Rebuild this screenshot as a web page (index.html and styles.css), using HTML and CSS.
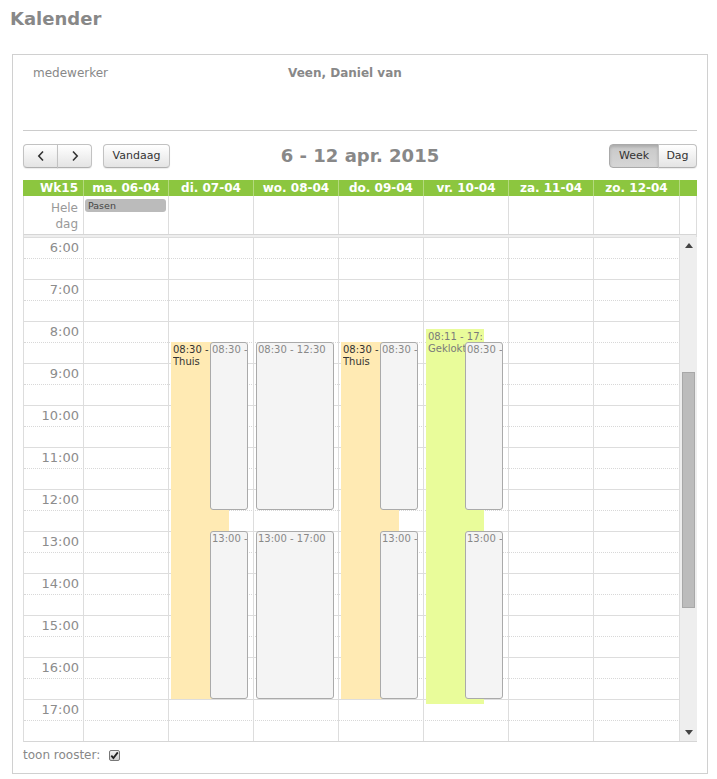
FILE: index.html
```html
<!DOCTYPE html>
<html lang="nl">
<head>
<meta charset="utf-8">
<title>Kalender</title>
<link rel="stylesheet" href="styles.css">
</head>
<body>
<h1 class="page-title">Kalender</h1>
<div class="panel">
  <div class="info">
    <span class="info-label">medewerker</span>
    <span class="info-value">Veen, Daniel van</span>
  </div>

  <div class="toolbar">
    <div class="tb-left">
      <div class="btn-group">
        <button class="btn btn-arrow" type="button" aria-label="vorige">
          <svg width="8" height="12" viewBox="0 0 8 12"><polyline points="6,1.5 1.8,6 6,10.5" fill="none" stroke="#333" stroke-width="1.6"/></svg>
        </button>
        <button class="btn btn-arrow" type="button" aria-label="volgende">
          <svg width="8" height="12" viewBox="0 0 8 12"><polyline points="2,1.5 6.2,6 2,10.5" fill="none" stroke="#333" stroke-width="1.6"/></svg>
        </button>
      </div>
      <button class="btn btn-today" type="button">Vandaag</button>
    </div>
    <h2 class="range-title">6 - 12 apr. 2015</h2>
    <div class="tb-right">
      <div class="btn-group">
        <button class="btn btn-week is-active" type="button">Week</button>
        <button class="btn btn-day" type="button">Dag</button>
      </div>
    </div>
  </div>

  <div class="cal-head">
    <div class="hd-cell hd-axis">Wk15</div>
    <div class="hd-cell">ma. 06-04</div>
    <div class="hd-cell">di. 07-04</div>
    <div class="hd-cell">wo. 08-04</div>
    <div class="hd-cell">do. 09-04</div>
    <div class="hd-cell">vr. 10-04</div>
    <div class="hd-cell">za. 11-04</div>
    <div class="hd-cell">zo. 12-04</div>
    <div class="hd-cell hd-gutter"></div>
  </div>

  <div class="allday">
    <div class="ad-cell ad-axis">Hele<br>dag</div>
    <div class="ad-cell"><div class="ad-event">Pasen</div></div>
    <div class="ad-cell"></div>
    <div class="ad-cell"></div>
    <div class="ad-cell"></div>
    <div class="ad-cell"></div>
    <div class="ad-cell"></div>
    <div class="ad-cell"></div>
    <div class="ad-cell ad-gutter"></div>
  </div>

  <div class="divider"></div>

  <div class="tg">
    <div class="tg-main">
      <div class="slots">
        <div class="slot hour"><span class="axis-label">6:00</span></div>
        <div class="slot half"></div>
        <div class="slot hour"><span class="axis-label">7:00</span></div>
        <div class="slot half"></div>
        <div class="slot hour"><span class="axis-label">8:00</span></div>
        <div class="slot half"></div>
        <div class="slot hour"><span class="axis-label">9:00</span></div>
        <div class="slot half"></div>
        <div class="slot hour"><span class="axis-label">10:00</span></div>
        <div class="slot half"></div>
        <div class="slot hour"><span class="axis-label">11:00</span></div>
        <div class="slot half"></div>
        <div class="slot hour"><span class="axis-label">12:00</span></div>
        <div class="slot half"></div>
        <div class="slot hour"><span class="axis-label">13:00</span></div>
        <div class="slot half"></div>
        <div class="slot hour"><span class="axis-label">14:00</span></div>
        <div class="slot half"></div>
        <div class="slot hour"><span class="axis-label">15:00</span></div>
        <div class="slot half"></div>
        <div class="slot hour"><span class="axis-label">16:00</span></div>
        <div class="slot half"></div>
        <div class="slot hour"><span class="axis-label">17:00</span></div>
        <div class="slot half"></div>
      </div>
      <div class="day-cols">
        <div class="col-axis"></div>
        <div class="day-col"></div>
        <div class="day-col">
          <div class="ev ev-back ev-thuis" style="top:105px;height:357px"><div class="ev-time">08:30 - 17:00</div><div class="ev-title">Thuis</div></div>
          <div class="ev ev-front ev-rooster" style="top:105px;height:168px"><div class="ev-time">08:30 - 12:30</div></div>
          <div class="ev ev-front ev-rooster" style="top:294px;height:168px"><div class="ev-time">13:00 - 17:00</div></div>
        </div>
        <div class="day-col">
          <div class="ev ev-full ev-rooster" style="top:105px;height:168px"><div class="ev-time">08:30 - 12:30</div></div>
          <div class="ev ev-full ev-rooster" style="top:294px;height:168px"><div class="ev-time">13:00 - 17:00</div></div>
        </div>
        <div class="day-col">
          <div class="ev ev-back ev-thuis" style="top:105px;height:357px"><div class="ev-time">08:30 - 17:00</div><div class="ev-title">Thuis</div></div>
          <div class="ev ev-front ev-rooster" style="top:105px;height:168px"><div class="ev-time">08:30 - 12:30</div></div>
          <div class="ev ev-front ev-rooster" style="top:294px;height:168px"><div class="ev-time">13:00 - 17:00</div></div>
        </div>
        <div class="day-col">
          <div class="ev ev-back ev-geklokt" style="top:92px;height:375px"><div class="ev-time">08:11 - 17:07</div><div class="ev-title">Geklokt</div></div>
          <div class="ev ev-front ev-rooster" style="top:105px;height:168px"><div class="ev-time">08:30 - 12:30</div></div>
          <div class="ev ev-front ev-rooster" style="top:294px;height:168px"><div class="ev-time">13:00 - 17:00</div></div>
        </div>
        <div class="day-col"></div>
        <div class="day-col"></div>
      </div>
    </div>
    <div class="scrollbar">
      <div class="sb-arrow">
        <svg width="8" height="5" viewBox="0 0 8 5"><polygon points="0,5 8,5 4,0" fill="#444"/></svg>
      </div>
      <div class="sb-track"><div class="sb-thumb"></div></div>
      <div class="sb-arrow">
        <svg width="8" height="5" viewBox="0 0 8 5"><polygon points="0,0 8,0 4,5" fill="#444"/></svg>
      </div>
    </div>
  </div>

  <div class="footer">
    <span class="footer-label">toon rooster:</span>
    <span class="check" role="checkbox" aria-checked="true">
      <svg width="9" height="9" viewBox="0 0 9 9"><polyline points="1.3,4.6 3.4,7 7.8,1.4" fill="none" stroke="#222" stroke-width="1.8"/></svg>
    </span>
  </div>
</div>
</body>
</html>
```

FILE: styles.css
```css
* { box-sizing: border-box; }

body {
  margin: 0;
  background: #fff;
  color: #888;
  font-family: "DejaVu Sans", Verdana, sans-serif;
}

.page-title {
  margin: 0;
  padding: 8px 0 0 10px;
  font-size: 18px;
  line-height: 22px;
  font-weight: bold;
  color: #888;
}

.panel {
  margin: 24px 0 0 12px;
  width: 696px;
  height: 720px;
  border: 1px solid #d0d0d0;
  padding: 0 10px;
}

/* info */
.info {
  display: flex;
  height: 76px;
  padding: 11px 10px 0;
  border-bottom: 1px solid #ccc;
  font-size: 12px;
  line-height: 15px;
}
.info-label { width: 255px; color: #888; }
.info-value { font-weight: bold; color: #888; }

/* toolbar */
.toolbar {
  display: grid;
  grid-template-columns: 1fr auto 1fr;
  align-items: center;
  height: 49px;
  padding: 13px 0 12px;
}
.tb-left { display: flex; align-items: center; gap: 11px; }
.tb-right { display: flex; justify-content: flex-end; }
.btn-group { display: flex; }

.btn {
  height: 24px;
  margin: 0;
  padding: 0 8px;
  border: 1px solid #c2c2c2;
  border-bottom-color: #b0b0b0;
  border-radius: 4px;
  background: linear-gradient(#ffffff, #e4e4e4);
  box-shadow: 0 1px 1px rgba(0,0,0,0.08);
  color: #333;
  font-family: "DejaVu Sans", Verdana, sans-serif;
  font-size: 11px;
  line-height: 22px;
  display: flex;
  align-items: center;
  justify-content: center;
}
.btn-group .btn + .btn { margin-left: -1px; }
.btn-group .btn:first-child { border-top-right-radius: 0; border-bottom-right-radius: 0; }
.btn-group .btn:last-child { border-top-left-radius: 0; border-bottom-left-radius: 0; }
.btn-arrow { width: 35px; padding: 0; }
.btn-today { width: 67px; padding: 0; }
.btn-week { width: 50px; padding: 0; }
.btn-day { width: 39px; padding: 0; }
.btn.is-active {
  background: linear-gradient(#c8c8c8, #d6d6d6);
  border-color: #aaa;
  box-shadow: inset 0 2px 3px rgba(0,0,0,0.15);
}

.range-title {
  margin: 0;
  font-size: 18px;
  line-height: 24px;
  font-weight: bold;
  color: #888;
}

/* header */
.cal-head {
  display: grid;
  grid-template-columns: 61px repeat(6, 85px) 86px 17px;
  height: 16px;
  background: #8cc63f;
}
.hd-cell {
  border-right: 1px solid #b4da7e;
  color: #fff;
  font-size: 12px;
  line-height: 16px;
  font-weight: bold;
  text-align: center;
  white-space: nowrap;
  overflow: hidden;
}
.hd-axis { text-align: right; padding-right: 5px; }
.hd-gutter { border-right: 0; }

/* all day */
.allday {
  display: grid;
  grid-template-columns: 60px repeat(6, 85px) 86px 16px;
  height: 38px;
  border-left: 1px solid #ddd;
  border-right: 1px solid #ddd;
}
.ad-cell { border-right: 1px solid #ddd; }
.ad-gutter { border-right: 0; }
.ad-axis {
  text-align: right;
  padding: 4px 5px 0 0;
  font-size: 12px;
  line-height: 16px;
  color: #999;
}
.ad-event {
  margin: 3px 2px 0 1px;
  height: 13px;
  background: #bbb;
  border-radius: 3px;
  padding-left: 3px;
  color: #444;
  font-size: 9.5px;
  line-height: 13px;
}

.divider {
  height: 3px;
  border-top: 1px solid #d6d6d6;
  background: #eee;
  border-left: 1px solid #ddd;
  border-right: 1px solid #ddd;
}

/* time grid */
.tg {
  display: flex;
  border-left: 1px solid #ddd;
  border-bottom: 1px solid #d6d6d6;
}
.tg-main {
  position: relative;
  flex: 1;
  height: 504px;
  overflow: hidden;
}
.slot {
  height: 21px;
  border-top: 1px solid #ddd;
}
.slot.half { border-top: 1px dotted #d8d8d8; }
.axis-label {
  display: block;
  width: 60px;
  padding: 2px 5px 0 0;
  text-align: right;
  font-size: 13px;
  line-height: 16px;
  color: #8c8c8c;
}

.day-cols {
  position: absolute;
  inset: 0;
  display: grid;
  grid-template-columns: 60px repeat(6, 85px) 86px;
}
.col-axis, .day-col { border-right: 1px solid #ddd; }
.day-col { position: relative; }

.ev {
  position: absolute;
  overflow: hidden;
  font-size: 10px;
  line-height: 12px;
  padding: 2px 2px 0;
  white-space: nowrap;
}
.ev-time, .ev-title { overflow: hidden; white-space: nowrap; }
.ev-back { left: 2px; width: 58px; z-index: 1; }
.ev-front { left: 41px; width: 38px; z-index: 2; }
.ev-full { left: 2px; width: 78px; z-index: 2; }

.ev-thuis { background: #ffeab3; color: #333; }
.ev-geklokt { background: #e9fc9a; color: #7a7a7a; }
.ev-rooster {
  background: #f4f4f4;
  border: 1px solid #aaa;
  border-radius: 3px;
  color: #888;
  padding: 1px 0 0 1px;
}

/* scrollbar */
.scrollbar {
  width: 17px;
  height: 504px;
  background: #eeeeee;
  display: flex;
  flex-direction: column;
}
.sb-arrow {
  height: 17px;
  display: flex;
  align-items: center;
  justify-content: center;
}
.sb-track { flex: 1; padding: 118px 2px 0; }
.sb-thumb {
  height: 236px;
  background: #bcbcbc;
  border: 1px solid #a8a8a8;
}

/* footer */
.footer {
  display: flex;
  align-items: center;
  gap: 9px;
  padding-top: 6px;
  font-size: 12px;
  line-height: 15px;
  color: #888;
}
.check {
  width: 11px;
  height: 11px;
  border: 1px solid #777;
  border-radius: 2px;
  background: linear-gradient(#f0f0f0, #d0d0d0);
  display: flex;
  align-items: center;
  justify-content: center;
}
```
